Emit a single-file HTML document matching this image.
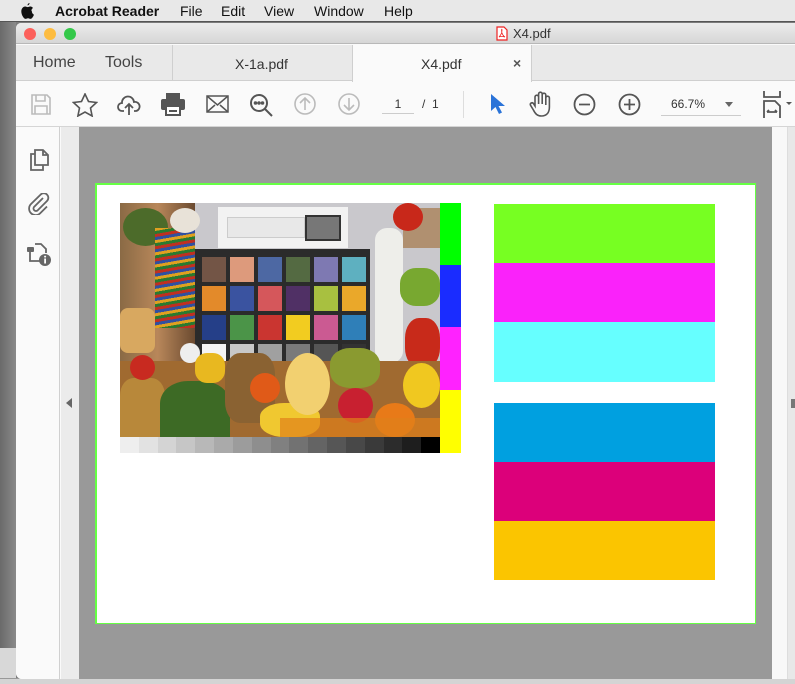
<!DOCTYPE html>
<html><head><meta charset="utf-8"><style>
*{margin:0;padding:0;box-sizing:border-box}
body{width:795px;height:684px;overflow:hidden;background:#7b7b7b;font-family:"Liberation Sans",sans-serif;position:relative}
.a{position:absolute}
.menu{left:0;top:0;width:795px;height:22px;background:#e8e8e8;border-bottom:1px solid #555;font-size:14px;color:#111}
.menu span{position:absolute;top:3px}
svg{position:absolute}
</style></head><body>
<div class="a" style="left:0;top:22px;width:16px;height:662px;background:linear-gradient(90deg,#6a6a6a,#8a8a8a)"></div>
<div class="a" style="left:0;top:648px;width:16px;height:30px;background:#d8d8d8"></div>
<div class="a" style="left:0;top:678px;width:795px;height:6px;background:#d4d4d4;border-top:1px solid #999"></div>
<div class="a menu">
<svg style="left:21px;top:3px" width="14" height="16" viewBox="0 0 14 16"><path d="M9.5 0c.1 1.2-.9 2.6-2.2 2.7C7.1 1.5 8.2.2 9.5 0zM11.6 8.5c0-2 1.6-2.9 1.7-3-1-1.4-2.4-1.6-2.9-1.6-1.2-.1-2.4.7-3 .7s-1.6-.7-2.6-.7C3.400 3.900 1.9 4.800 1.1 6.200c-1.600 2.800-.4 7 1.200 9.200.8 1.100 1.600 2.300 2.700 2.200 1.100 0 1.500-.7 2.800-.7s1.700.7 2.800.7c1.200 0 1.900-1.100 2.600-2.200.8-1.200 1.200-2.400 1.200-2.500 0 0-2.300-.9-2.300-3.600z" fill="#111" transform="scale(.9)"/></svg>
<span style="left:55px;font-weight:bold">Acrobat Reader</span>
<span style="left:180px">File</span><span style="left:221px">Edit</span><span style="left:264px">View</span><span style="left:314px">Window</span><span style="left:384px">Help</span>
</div>
<div class="a" style="left:16px;top:23px;width:779px;height:656px;background:#fafafa;border-radius:5px 0 0 6px;overflow:hidden">
 <div class="a" style="left:0;top:0;width:779px;height:21px;background:linear-gradient(#ececec,#d6d6d6);border-bottom:1px solid #b8b8b8"></div>
 <div class="a" style="left:8px;top:5px;width:12px;height:12px;border-radius:50%;background:#fc605b"></div>
 <div class="a" style="left:28px;top:5px;width:12px;height:12px;border-radius:50%;background:#fdbc40"></div>
 <div class="a" style="left:48px;top:5px;width:12px;height:12px;border-radius:50%;background:#34c84a"></div>
 <svg style="left:480px;top:3px" width="12" height="15" viewBox="0 0 12 15"><path d="M1 1h7l3 3v10H1z" fill="#fff" stroke="#e22" stroke-width="1.2"/><path d="M3 11c2-2 3-5 3-7s-1 0 0 3 3 4 3 4-4-1-6 0z" fill="none" stroke="#e22" stroke-width=".8"/></svg>
 <div class="a" style="left:497px;top:3px;font-size:13px;color:#333">X4.pdf</div>
 <div class="a" style="left:0;top:22px;width:779px;height:36px;background:#e9e9e9;border-bottom:1px solid #cfcfcf"></div>
 <div class="a" style="left:17px;top:31px;font-size:16px;color:#444">Home</div>
 <div class="a" style="left:89px;top:31px;font-size:16px;color:#444">Tools</div>
 <div class="a" style="left:156px;top:22px;width:1px;height:36px;background:#cfcfcf"></div>
 <div class="a" style="left:219px;top:33px;font-size:14px;color:#333">X-1a.pdf</div>
 <div class="a" style="left:336px;top:22px;width:180px;height:37px;background:#fafafa;border-left:1px solid #cfcfcf;border-right:1px solid #cfcfcf"></div>
 <div class="a" style="left:405px;top:33px;font-size:14px;color:#333">X4.pdf</div>
 <div class="a" style="left:497px;top:32px;font-size:14px;color:#555;font-weight:bold">×</div>
 <div class="a" style="left:0;top:103px;width:779px;height:1px;background:#d5d5d5"></div>
 <svg style="left:15px;top:71px" width="20" height="21" viewBox="0 0 20 21" fill="none" stroke="#bbb" stroke-width="1.6"><path d="M1 1h15l3 3v16H1z M5 1v6h9V1 M4 12h12v8H4z"/></svg>
 <svg style="left:56px;top:70px" width="26" height="24" viewBox="0 0 26 24" fill="none" stroke="#555" stroke-width="1.6"><path d="M13 1l3.5 7.5 8 1-6 5.5 1.6 8L13 19l-7.1 4 1.6-8-6-5.5 8-1z"/></svg>
 <svg style="left:101px;top:70px" width="24" height="24" viewBox="0 0 24 24" fill="none" stroke="#555" stroke-width="1.8"><path d="M7 18H5a4 4 0 0 1 0-8 6 6 0 0 1 12-1 4.5 4.5 0 0 1 2 9h-2 M12 22V11 M8 15l4-4 4 4"/></svg>
 <svg style="left:145px;top:70px" width="24" height="23" viewBox="0 0 24 23"><rect x="5" y="0" width="14" height="6" fill="#555"/><rect x="0" y="6" width="24" height="11" rx="2" fill="#555"/><rect x="5" y="13" width="14" height="9" fill="#fff" stroke="#555" stroke-width="2"/><rect x="8" y="17" width="8" height="2" fill="#555"/></svg>
 <svg style="left:190px;top:72px" width="23" height="18" viewBox="0 0 23 18" fill="none" stroke="#555" stroke-width="1.5"><rect x="1" y="1" width="21" height="16"/><path d="M1 1l10.5 9L22 1 M1 17l8-7 M22 17l-8-7"/></svg>
 <svg style="left:233px;top:70px" width="24" height="24" viewBox="0 0 24 24" fill="none" stroke="#555" stroke-width="2"><circle cx="10" cy="10" r="8"/><path d="M16 16l7 7"/><circle cx="6.5" cy="10" r=".8" fill="#555"/><circle cx="10" cy="10" r=".8" fill="#555"/><circle cx="13.5" cy="10" r=".8" fill="#555"/></svg>
 <svg style="left:278px;top:70px" width="22" height="22" viewBox="0 0 22 22" fill="none" stroke="#bbb" stroke-width="1.6"><circle cx="11" cy="11" r="10"/><path d="M11 17V5 M6 10l5-5 5 5"/></svg>
 <svg style="left:322px;top:70px" width="22" height="22" viewBox="0 0 22 22" fill="none" stroke="#bbb" stroke-width="1.6"><circle cx="11" cy="11" r="10"/><path d="M11 5v12 M6 12l5 5 5-5"/></svg>
 <div class="a" style="left:366px;top:74px;width:32px;height:17px;border-bottom:1px solid #ccc;text-align:center;font-size:12px;color:#333">1</div>
 <div class="a" style="left:406px;top:74px;font-size:12px;color:#333">/ &nbsp;1</div>
 <div class="a" style="left:447px;top:68px;width:1px;height:27px;background:#ddd"></div>
 <svg style="left:474px;top:70px" width="16" height="22" viewBox="0 0 16 22"><path d="M1 1v17l4.5-4 3.5 7 3-1.5-3.5-6.5H15z" fill="#2a73d8"/></svg>
 <svg style="left:513px;top:68px" width="24" height="26" viewBox="0 0 24 26" fill="none" stroke="#555" stroke-width="1.6"><path d="M6 15V6a1.8 1.8 0 0 1 3.6 0v7V3a1.8 1.8 0 0 1 3.6 0v10V4a1.8 1.8 0 0 1 3.6 0v10V7a1.8 1.8 0 0 1 3.6 0v9c0 6-3 9-8 9-4 0-6-2-8-6l-3-5a1.7 1.7 0 0 1 3-1.5z"/></svg>
 <svg style="left:557px;top:70px" width="23" height="23" viewBox="0 0 23 23" fill="none" stroke="#555" stroke-width="1.8"><circle cx="11.5" cy="11.5" r="10"/><path d="M6 11.5h11"/></svg>
 <svg style="left:602px;top:70px" width="23" height="23" viewBox="0 0 23 23" fill="none" stroke="#555" stroke-width="1.8"><circle cx="11.5" cy="11.5" r="10"/><path d="M6 11.5h11 M11.5 6v11"/></svg>
 <div class="a" style="left:645px;top:74px;width:80px;height:19px;border-bottom:1px solid #ccc;font-size:12px;color:#333;padding-left:10px">66.7%</div>
 <div class="a" style="left:709px;top:79px;width:0;height:0;border-left:4px solid transparent;border-right:4px solid transparent;border-top:5px solid #666"></div>
 <svg style="left:746px;top:68px" width="33" height="28" viewBox="0 0 33 28" fill="none" stroke="#555" stroke-width="1.8"><path d="M2 0v6h16V0 M2 27V10h11l5 5v12 M5 21h10 M5 21l2-2 M15 21l-2-2"/><path d="M24 11l3 3 3-3z" fill="#555" stroke="none"/></svg>
 <div class="a" style="left:0;top:104px;width:44px;height:552px;background:#fafafa;border-right:1px solid #d0d0d0"></div>
 <svg style="left:14px;top:126px" width="20" height="22" viewBox="0 0 20 22" fill="none" stroke="#666" stroke-width="1.8"><path d="M5 16V1h8l5 5v10z M13 1v5h5 M5 5H1v16h12v-5"/></svg>
 <svg style="left:12px;top:170px" width="22" height="22" viewBox="0 0 22 22" fill="none" stroke="#666" stroke-width="1.8"><path d="M15 5L6 14a2.5 2.5 0 0 0 3.5 3.5L19 8a4.5 4.5 0 0 0-6.4-6.4L3 11a6.5 6.5 0 0 0 9.2 9.2L19 13.5"/></svg>
 <svg style="left:10px;top:218px" width="26" height="26" viewBox="0 0 26 26"><path d="M4 9V20h10 M9 3h6l5 5v4" fill="none" stroke="#666" stroke-width="1.8"/><rect x="1" y="6" width="7" height="5" rx="1" fill="#666"/><circle cx="19" cy="19" r="6" fill="#666"/><rect x="18.2" y="17.5" width="1.8" height="5" fill="#fff"/><circle cx="19.1" cy="15.6" r="1" fill="#fff"/></svg>
 <div class="a" style="left:45px;top:104px;width:18px;height:552px;background:#ebebeb"></div>
 <div class="a" style="left:50px;top:375px;width:0;height:0;border-top:5px solid transparent;border-bottom:5px solid transparent;border-right:6px solid #666"></div>
 <div class="a" style="left:63px;top:104px;width:693px;height:552px;background:#999"></div>
 <div class="a" style="left:756px;top:104px;width:16px;height:552px;background:#f8f8f8;border-right:1px solid #ddd"></div>
 <div class="a" style="left:772px;top:104px;width:7px;height:552px;background:#e8e8e8"></div>
 <div class="a" style="left:775px;top:376px;width:4px;height:9px;background:#777"></div>
</div>
<div class="a" style="left:95px;top:183px;width:661px;height:441px;background:#fff;border:2px solid #66ff44;border-right-width:1px;border-bottom-width:1px"></div>
<div class="a" style="left:120px;top:203px;width:320px;height:234px;background:#c9c8cc;overflow:hidden">
 <div class="a" style="left:0;top:0;width:75px;height:234px;background:linear-gradient(90deg,#8a6a45,#b8875a 50%,#6b4a30)"></div>
 <div class="a" style="left:3px;top:5px;width:45px;height:38px;border-radius:50%;background:#4c6b2a"></div>
 <div class="a" style="left:0;top:105px;width:35px;height:45px;background:#d8a860;border-radius:8px"></div>
 <div class="a" style="left:35px;top:25px;width:40px;height:100px;background:repeating-linear-gradient(170deg,#e0a020 0 3px,#2a7a30 3px 6px,#c03020 6px 9px,#3050a0 9px 12px)"></div>
 <div class="a" style="left:50px;top:5px;width:30px;height:25px;border-radius:50%;background:#e8e2d8"></div>
 <div class="a" style="left:98px;top:4px;width:130px;height:41px;background:#f2f2f2"></div>
 <div class="a" style="left:107px;top:14px;width:78px;height:21px;background:#e8e8e8;border:1px solid #ccc"></div>
 <div class="a" style="left:185px;top:12px;width:36px;height:26px;background:#777;border:2px solid #333"></div>
 <div class="a" style="left:75px;top:46px;width:175px;height:118px;background:#2b2b2b"></div>
 <div class="a" style="left:82px;top:54px;display:grid;grid-template-columns:repeat(6,24px);grid-auto-rows:25px;gap:4px">
  <div style="background:#735546"></div><div style="background:#dd9a7c"></div><div style="background:#4d68a3"></div><div style="background:#546a42"></div><div style="background:#7e79b2"></div><div style="background:#5eb0c0"></div>
  <div style="background:#e38a2a"></div><div style="background:#3a53a0"></div><div style="background:#d5575b"></div><div style="background:#503065"></div><div style="background:#a8c040"></div><div style="background:#eaa82a"></div>
  <div style="background:#253f88"></div><div style="background:#4b9448"></div><div style="background:#ca3530"></div><div style="background:#f2cc20"></div><div style="background:#cb5a92"></div><div style="background:#2f7fb8"></div>
  <div style="background:#f4f4f4"></div><div style="background:#c8c8c8"></div><div style="background:#a0a0a0"></div><div style="background:#7a7a7a"></div><div style="background:#555"></div><div style="background:#333"></div>
 </div>
 <div class="a" style="left:255px;top:25px;width:28px;height:135px;background:#eeeeea;border-radius:12px"></div>
 <div class="a" style="left:283px;top:5px;width:37px;height:40px;background:#b09070"></div>
 <div class="a" style="left:273px;top:0;width:30px;height:28px;border-radius:50%;background:#c8281a"></div>
 <div class="a" style="left:280px;top:65px;width:40px;height:38px;border-radius:40%;background:#78a830"></div>
 <div class="a" style="left:285px;top:115px;width:35px;height:50px;border-radius:40%;background:#c82a1a"></div>
 <div class="a" style="left:0;top:158px;width:320px;height:76px;background:#a06a30"></div>
 <div class="a" style="left:0;top:175px;width:45px;height:59px;background:#b8883a;border-radius:30% 30% 0 0"></div>
 <div class="a" style="left:40px;top:178px;width:70px;height:56px;background:#3d6a25;border-radius:40% 40% 0 0"></div>
 <div class="a" style="left:10px;top:152px;width:25px;height:25px;border-radius:50%;background:#c82a20"></div>
 <div class="a" style="left:60px;top:140px;width:20px;height:20px;border-radius:50%;background:#eee"></div>
 <div class="a" style="left:75px;top:150px;width:30px;height:30px;border-radius:40%;background:#e8b820"></div>
 <div class="a" style="left:105px;top:150px;width:50px;height:70px;background:#8a6232;border-radius:30%"></div>
 <div class="a" style="left:130px;top:170px;width:30px;height:30px;border-radius:50%;background:#e05a18"></div>
 <div class="a" style="left:140px;top:200px;width:60px;height:34px;border-radius:40%;background:#f0c830"></div>
 <div class="a" style="left:165px;top:150px;width:45px;height:62px;border-radius:50%;background:#f2d070"></div>
 <div class="a" style="left:210px;top:145px;width:50px;height:40px;border-radius:40%;background:#8a9a30"></div>
 <div class="a" style="left:218px;top:185px;width:35px;height:35px;border-radius:50%;background:#c82030"></div>
 <div class="a" style="left:255px;top:200px;width:40px;height:34px;border-radius:50%;background:#e87a18"></div>
 <div class="a" style="left:283px;top:160px;width:37px;height:45px;border-radius:50%;background:#f0c820"></div>
 <div class="a" style="left:160px;top:215px;width:160px;height:19px;background:#e0801a;opacity:.7"></div>
</div>
<div class="a" style="left:120px;top:437px;width:320px;height:16px;display:flex">
 <div style="flex:1;background:#eee"></div><div style="flex:1;background:#e2e2e2"></div><div style="flex:1;background:#d4d4d4"></div><div style="flex:1;background:#c6c6c6"></div><div style="flex:1;background:#b8b8b8"></div><div style="flex:1;background:#aaa"></div><div style="flex:1;background:#9c9c9c"></div><div style="flex:1;background:#8e8e8e"></div><div style="flex:1;background:#808080"></div><div style="flex:1;background:#727272"></div><div style="flex:1;background:#646464"></div><div style="flex:1;background:#565656"></div><div style="flex:1;background:#484848"></div><div style="flex:1;background:#3a3a3a"></div><div style="flex:1;background:#2c2c2c"></div><div style="flex:1;background:#1e1e1e"></div><div style="flex:1;background:#000"></div>
</div>
<div class="a" style="left:440px;top:203px;width:21px;height:62px;background:#00ff00"></div>
<div class="a" style="left:440px;top:265px;width:21px;height:62px;background:#1a2cff"></div>
<div class="a" style="left:440px;top:327px;width:21px;height:63px;background:#ff22ff"></div>
<div class="a" style="left:440px;top:390px;width:21px;height:63px;background:#ffff00"></div>
<div class="a" style="left:494px;top:204px;width:221px;height:59px;background:#77ff22"></div>
<div class="a" style="left:494px;top:263px;width:221px;height:59px;background:#fa22fa"></div>
<div class="a" style="left:494px;top:322px;width:221px;height:60px;background:#66ffff"></div>
<div class="a" style="left:494px;top:403px;width:221px;height:59px;background:#00a0e0"></div>
<div class="a" style="left:494px;top:462px;width:221px;height:59px;background:#dc007a"></div>
<div class="a" style="left:494px;top:521px;width:221px;height:59px;background:#fbc500"></div>
</body></html>
